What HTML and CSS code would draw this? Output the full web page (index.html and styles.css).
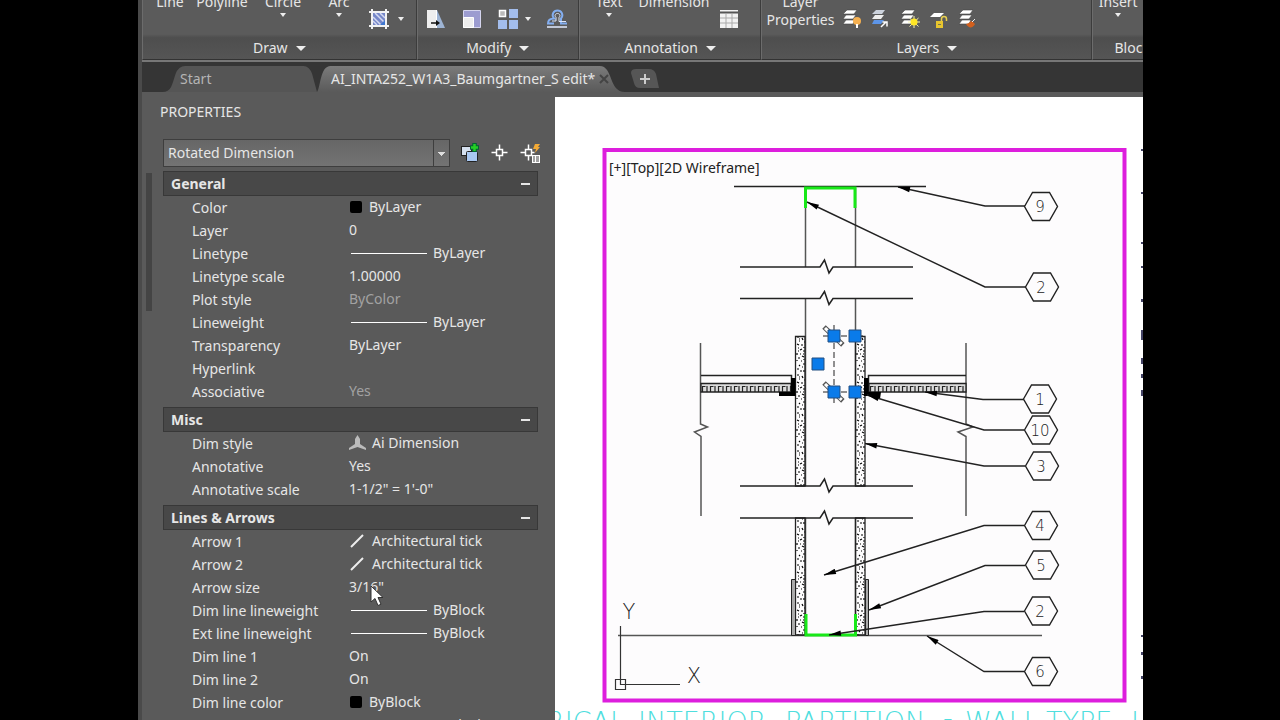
FILE: index.html
```html
<!DOCTYPE html>
<html lang="en">
<head>
<meta charset="utf-8">
<title>AI_INTA252_W1A3_Baumgartner_S edit</title>
<link rel="stylesheet" href="styles.css">
</head>
<body>
<div class="app">
  <header class="ribbon">
    <section class="panel draw">
      <div class="tools">
        <button class="tool w-line">Line<i class="slot"></i></button>
        <button class="tool w-poly">Polyline<i class="slot"></i></button>
        <button class="tool w-circle">Circle<i class="slot caret"></i></button>
        <button class="tool w-arc">Arc<i class="slot caret"></i></button>
        <button class="mini split" aria-label="Hatch"><svg width="20" height="20" viewBox="0 0 20 20"><rect x="4" y="4" width="12" height="12" fill="#7687c8"/><path d="M4 8l8 8M4 12l4 4M6 4l10 10M11 4l5 5" stroke="#d5daf0" stroke-width="1.500"/><path d="M11 16l5-5v5z" fill="#3f78d0"/><path d="M3 0v20M17 0v20M0 3h20M0 17h20" stroke="#f2f2f2" stroke-width="2"/></svg><i class="caret"></i></button>
      </div>
      <button class="title">Draw<i class="caret big"></i></button>
    </section>
    <section class="panel modify">
      <div class="tools spread">
        <button class="mini" aria-label="Stretch"><svg width="20" height="20" viewBox="0 0 20 20"><path d="M1 1h9v18H1z" fill="#eee"/><path d="M11 1l8 18h-8z" fill="#9eb4d4"/><path d="M10.500 1v18" stroke="#fff"/><path d="M5 14h7" stroke="#111" stroke-width="1.500"/><path d="M10 11l4 3-4 3z" fill="#111"/></svg></button>
        <button class="mini" aria-label="Scale"><svg width="20" height="20" viewBox="0 0 20 20"><path d="M1.500 1.500h17v17h-17z" fill="#9c9cd0" stroke="#d5d5ee"/><path d="M1.500 8.500h10v10h-10z" fill="#eee" stroke="#fff"/></svg></button>
        <button class="mini split" aria-label="Array"><svg width="20" height="20" viewBox="0 0 20 20"><path d="M1.500 1.500h6v6h-6z" fill="#bbb" stroke="#fff" stroke-width="1.500"/><path d="M11 0h9v9h-9zM0 11h9v9H0zM11 11h9v9h-9z" fill="#a3bdec"/></svg><i class="caret"></i></button>
        <button class="mini" aria-label="Offset"><svg width="20" height="20" viewBox="0 0 20 20"><path d="M0 18h20" stroke="#e5ecff" stroke-width="1.500"/><path d="M20 14.500H14V9.500C17 6 14.500 1.500 10.500 1.500S4 6 7 9.500C3 9.500 1 11.500 1 14.500H7" fill="none" stroke="#83aef0" stroke-width="2"/><path d="M19 12.500h-7V8.500c2-2 .500-4-1.500-4s-3.500 2-1.500 4v3.500H5" fill="none" stroke="#dde6fa"/></svg></button>
      </div>
      <button class="title">Modify<i class="caret big"></i></button>
    </section>
    <section class="panel annot">
      <div class="tools">
        <button class="tool w-text">Text<i class="slot caret"></i></button>
        <button class="tool w-dim">Dimension<i class="slot"></i></button>
        <button class="mini" aria-label="Table"><svg width="18" height="20" viewBox="0 0 18 20"><path d="M0 1h18v18H0z" fill="#f2f2f2"/><path d="M0 3.500h18" stroke="#555" stroke-width="2"/><path d="M0 9h18M0 14h18M6 5v14M12 5v14" stroke="#aaa"/></svg></button>
      </div>
      <button class="title">Annotation<i class="caret big"></i></button>
    </section>
    <section class="panel layers">
      <div class="tools">
        <button class="mini stacked">Layer<br>Properties</button>
        <div class="icons">
          <button class="mini" aria-label="Layer off"><svg width="20" height="20" viewBox="0 0 20 20"><path d="M5 1h10l-3 4H1zM4 6h10l-3 4H1zM4 11h9l-2 4H1z" fill="#fff" stroke="#444" stroke-width=".6"/><circle cx="15" cy="12" r="4" fill="#f5b050"/><path d="M15 15v4" stroke="#fff" stroke-width="2"/></svg></button>
          <button class="mini" aria-label="Layer match"><svg width="20" height="20" viewBox="0 0 20 20"><path d="M5 1h9l-3 4H1z" fill="#ccd2dc"/><path d="M4 6h9l-3 4H1z" fill="#eee"/><path d="M3 11h10l-3 4H1z" fill="#5d95e8"/><path d="M10 18l5-5M11.500 13H16v4.500" fill="none" stroke="#fff" stroke-width="1.500"/></svg></button>
          <button class="mini" aria-label="Layer freeze"><svg width="20" height="20" viewBox="0 0 20 20"><path d="M5 1h10l-3 4H1zM4 6h10l-3 4H1zM4 11h9l-2 4H1z" fill="#fff" stroke="#444" stroke-width=".6"/><path d="M14 7v12M8 13h12M9.500 9l9 8.500M18.500 9l-9 8.500" stroke="#f8f5b0"/><circle cx="14" cy="13" r="3.500" fill="#ffe624"/></svg></button>
          <button class="mini" aria-label="Layer unlock"><svg width="20" height="20" viewBox="0 0 20 20"><path d="M5 4h10l-4 4H1z" fill="#fff"/><path d="M7 12h7v7H7z" fill="#e8c52e"/><path d="M9 15.500h3" stroke="#775"/><path d="M12.500 12v-2a2.500 2.500 0 0 1 5 0v2" fill="none" stroke="#e8d050" stroke-width="1.500"/></svg></button>
          <button class="mini" aria-label="Layer change"><svg width="20" height="20" viewBox="0 0 20 20"><path d="M5 1h10l-3 4H1zM4 6h10l-3 4H1zM4 11h9l-2 4H1z" fill="#fff" stroke="#444" stroke-width=".6"/><path d="M8 15c3 0 4-3 6-3l3 3c-2 4-6 5-9 0z" fill="#d2601e"/><path d="M14 13l3-3" stroke="#eee"/></svg></button>
        </div>
      </div>
      <button class="title">Layers<i class="caret big"></i></button>
    </section>
    <section class="panel block">
      <div class="tools"><button class="tool w-insert">Insert<i class="slot caret"></i></button></div>
      <button class="title left">Bloc</button>
    </section>
  </header>

  <nav class="tabs">
    <button class="tab start"><svg class="shape" viewBox="0 0 160 27" preserveAspectRatio="none"><path d="M0 27C10 27 10 20 14 9Q17 1 24 1H146Q152 1 155 9L160 27z" fill="#555"/></svg><span>Start</span></button>
    <div class="tab active"><svg class="shape" viewBox="0 0 316 27" preserveAspectRatio="none"><defs><linearGradient id="tg" x2="0" y2="1"><stop stop-color="#7b7b7b"/><stop offset="1" stop-color="#5a5a5a"/></linearGradient></defs><path d="M0 27C4 22 3 1 14 1H290C304 1 299 27 316 27z" fill="url(#tg)"/></svg><button class="name">AI_INTA252_W1A3_Baumgartner_S edit*</button><button class="close" aria-label="Close"><svg width="10" height="10" viewBox="0 0 10 10"><path d="M1 1l8 8M9 1L1 9" stroke="#444" stroke-width="2"/></svg></button></div>
    <button class="add" aria-label="New tab"><svg width="28" height="19" viewBox="0 0 28 19"><path d="M5 0h13q5 0 7 5l3 14H9Q4 19 3 14L0 4Q0 0 5 0z" fill="#565656"/><path d="M14 5v10M9 10h10" stroke="#ccc" stroke-width="2"/></svg></button>
  </nav>

  <main class="work">
    <aside class="props">
      <h1>PROPERTIES</h1>
      <div class="chooser">
        <select aria-label="Object type"><option>Rotated Dimension</option></select>
        <button class="pick" aria-label="Toggle pickadd"><svg width="20" height="20" viewBox="0 0 20 20"><rect x="1.500" y="3.500" width="10" height="9" fill="#d5e0ee" stroke="#222"/><rect x="6.500" y="8.500" width="11" height="10" rx="1" fill="#a9c8f2" stroke="#222"/><path d="M14.500 0v9M10 4.500h9" stroke="#063" stroke-width="4.500"/><path d="M14.500 1v7M11 4.500h7" stroke="#25d025" stroke-width="2.500"/></svg></button>
        <button class="pick" aria-label="Select objects"><svg width="20" height="20" viewBox="0 0 20 20"><path d="M9.500 1.500v5M9.500 12.500v5M1.500 9.500h5M12.500 9.500h5M6.500 6.500h6v6h-6z" fill="none" stroke="#fff" stroke-width="1.500"/></svg></button>
        <button class="pick" aria-label="Quick select"><svg width="20" height="20" viewBox="0 0 20 20"><path d="M8.500 1.500v5M8.500 12.500v5M.500 9.500h5M11.500 9.500h3M5.500 6.500h6v6h-6z" fill="none" stroke="#fff" stroke-width="1.500"/><path d="M15 1h5l-2 3h2l-5 6 1-4h-3z" fill="#f3aa35"/><path d="M12 12h8v8h-8z" fill="#fff"/><path d="M13 14h2m1 0h3m-6 2h2m1 0h3m-6 2h2m1 0h3" stroke="#444"/></svg></button>
      </div>
      <div class="list">
        <div class="thumb"></div>
        <div class="groups">
          <section>
            <h2>General<button aria-label="Collapse General"><i class="minus"></i></button></h2>
            <table>
              <tr><th>Color</th><td><i class="swatch"></i>ByLayer</td></tr>
              <tr><th>Layer</th><td>0</td></tr>
              <tr><th>Linetype</th><td><i class="rule"></i>ByLayer</td></tr>
              <tr><th>Linetype scale</th><td>1.00000</td></tr>
              <tr><th>Plot style</th><td class="dim">ByColor</td></tr>
              <tr><th>Lineweight</th><td><i class="rule"></i>ByLayer</td></tr>
              <tr><th>Transparency</th><td>ByLayer</td></tr>
              <tr><th>Hyperlink</th><td></td></tr>
              <tr><th>Associative</th><td class="dim">Yes</td></tr>
            </table>
          </section>
          <section>
            <h2>Misc<button aria-label="Collapse Misc"><i class="minus"></i></button></h2>
            <table>
              <tr><th>Dim style</th><td><svg class="glyph" width="17" height="16" viewBox="0 0 17 16"><path d="M8.500 0L11 4v5l6 4v2l-8.500-3L0 15v-2l6-4V4z" fill="#bbb"/></svg>Ai Dimension</td></tr>
              <tr><th>Annotative</th><td>Yes</td></tr>
              <tr><th>Annotative scale</th><td>1-1/2" = 1'-0"</td></tr>
            </table>
          </section>
          <section>
            <h2>Lines &amp; Arrows<button aria-label="Collapse Lines and Arrows"><i class="minus"></i></button></h2>
            <table>
              <tr><th>Arrow 1</th><td><svg class="glyph" width="17" height="16" viewBox="0 0 17 16"><path d="M2 14L14 2" stroke="#eee" stroke-width="2"/></svg>Architectural tick</td></tr>
              <tr><th>Arrow 2</th><td><svg class="glyph" width="17" height="16" viewBox="0 0 17 16"><path d="M2 14L14 2" stroke="#eee" stroke-width="2"/></svg>Architectural tick</td></tr>
              <tr><th>Arrow size</th><td class="hover">3/16"<svg class="cursor" width="14" height="22" viewBox="0 0 14 22"><path d="M1 1v16l4-3.500 3 7 3-1.300-3-6.700h5z" fill="#fff" stroke="#333"/></svg></td></tr>
              <tr><th>Dim line lineweight</th><td><i class="rule"></i>ByBlock</td></tr>
              <tr><th>Ext line lineweight</th><td><i class="rule"></i>ByBlock</td></tr>
              <tr><th>Dim line 1</th><td>On</td></tr>
              <tr><th>Dim line 2</th><td>On</td></tr>
              <tr><th>Dim line color</th><td><i class="swatch"></i>ByBlock</td></tr>
              <tr><th></th><td><i class="rule"></i>ByBlock</td></tr>
            </table>
          </section>
        </div>
      </div>
    </aside>

    <div class="canvas">
      <svg class="drawing" viewBox="555 97 588 623" preserveAspectRatio="xMinYMin slice">
        <defs>
          <pattern id="gyp" x="796" y="336" width="10" height="38" patternUnits="userSpaceOnUse">
            <path d="M1 1h2M6 2l1 2M3 5h1M8 6h1M1 8l2 1M5 9h2M8 11v1M2 12h1M4 14l2-1M7 15h2M1 17v2M4 18h1M6 20l2 1M2 22h2M8 24v-1M5 25h1M3 29l1 1M7 28h2M6 31h1M1 33h2M8 34v2M4 35h2M7 18h1M1 25v-1M3 3h1M2 15h1" stroke="#000" stroke-width="1.200" fill="none"/>
          </pattern>
          <pattern id="insul" x="701" y="383" width="8" height="10" patternUnits="userSpaceOnUse">
            <path d="M1.500 10V3.500h3M6 3v6" fill="none" stroke="#222" stroke-width="1.200"/>
          </pattern>
          <marker id="arr" markerUnits="userSpaceOnUse" markerWidth="14" markerHeight="8" refX="0" refY="3" orient="auto"><path d="M0 3L12 .3v5.400z" fill="#000"/></marker>
          <path id="hex" d="M-16.500 0L-8.500-14H8.500L16.500 0L8.500 14H-8.500z" fill="#fdfcfd"/>
          <path id="brk" d="M740 0h80l4.500-7 4.500 13 4-6h80"/>
        </defs>
        <rect x="604.500" y="150" width="520" height="550.500" fill="#fdfcfd" stroke="#dd1edd" stroke-width="4"/>

        <g fill="none" stroke="#555" stroke-width="1.500">
          <path d="M805.500 188V267M855.500 188V267M805.500 299V486M855.500 299V486M805.500 518V635M855.500 518V635"/>
          <path d="M700.500 343V424l7 3-13 5 6.500 4.500V516M966 343V424l7 3-15 5 8 4.500V516"/>
          <path d="M618 635.500H1042"/>
        </g>
        <g fill="url(#gyp)" stroke="#222" stroke-width="1.300">
          <path d="M795.500 336.500h9.500V486h-9.500zM855.500 336.500h9.500V486h-9.500zM795.500 518h9.500v117h-9.500zM855.500 518h9.500v117h-9.500z"/>
        </g>
        <g fill="#aaa" stroke="#222"><path d="M791.500 579.500h4v56h-4zM865.500 579.500h3v56h-3z"/></g>
        <g fill="none" stroke="#222" stroke-width="1.500">
          <path d="M734 186.500H926"/>
          <use href="#brk" y="267"/><use href="#brk" y="298.500"/><use href="#brk" y="486"/><use href="#brk" y="518"/>
          <path d="M701 375.500h90.500V392M966 375.500h-97.500V392"/>
        </g>
        <g fill="#dcdcdc"><path d="M701 383.500h90V392h-90zM869 383.500h97V392h-97z"/></g>
        <g fill="url(#insul)" stroke="#222" stroke-width="1.300"><path d="M701 383.500h90V392h-90zM869 383.500h97V392h-97z"/></g>
        <path d="M791 378h4.500v18H779v-4h12zM864 378h4.500v14H881l-1 7-8-3h-8z"/>
        <path d="M805.500 208V188H855V208M806 614V635H855.500V614" fill="none" stroke="#18e818" stroke-width="3"/>

        <g fill="none" stroke="#222" stroke-width="1.400">
          <path marker-start="url(#arr)" d="M898 187L985 206H1025"/>
          <path marker-start="url(#arr)" d="M807 202L985 287H1026"/>
          <path marker-start="url(#arr)" d="M925 392L983 399.500H1024"/>
          <path marker-start="url(#arr)" d="M867 395L984 430H1024"/>
          <path marker-start="url(#arr)" d="M865 443.500L984 466H1025"/>
          <path marker-start="url(#arr)" d="M824 575L984 525.500H1024"/>
          <path marker-start="url(#arr)" d="M869 610L985 565.500H1025"/>
          <path marker-start="url(#arr)" d="M829 635L984 611.500H1024"/>
          <path marker-start="url(#arr)" d="M927 636L984 671.500H1024"/>
        </g>
        <g stroke="#222" stroke-width="1.400">
          <use href="#hex" x="1041" y="206.500"/><use href="#hex" x="1042" y="287"/><use href="#hex" x="1040" y="399"/><use href="#hex" x="1041" y="430"/><use href="#hex" x="1042" y="466"/><use href="#hex" x="1041" y="525.500"/><use href="#hex" x="1042" y="565"/><use href="#hex" x="1041" y="611"/><use href="#hex" x="1041" y="671.500"/>
        </g>
        <g class="cad num">
          <text x="1040" y="212">9</text><text x="1041" y="293">2</text><text x="1040" y="405">1</text><text x="1040" y="436">10</text><text x="1041" y="472">3</text><text x="1040" y="531">4</text><text x="1041" y="571">5</text><text x="1040" y="617">2</text><text x="1040" y="677">6</text>
        </g>

        <path d="M834 325V403M823 336h40M823 392h40" fill="none" stroke="#222" stroke-dasharray="6 3"/>
        <g fill="none"><path d="M824 327l19 18M824 383l19 18" stroke="#555" stroke-width="5" stroke-dasharray="9 8"/><path d="M825 328l18 17M825 384l18 17" stroke="#fff" stroke-width="3" stroke-dasharray="7 9"/></g>
        <g fill="#0a7bea" stroke="#224f80"><path d="M828 330h12v12h-12zM849 330h12v12h-12zM812 358h12v12h-12zM828 386h12v12h-12zM849 386h12v12h-12z"/></g>

        <path d="M620.500 626V684.500H680M615.500 679.500h10v10h-10z" fill="none" stroke="#333" stroke-width="1.200"/>
        <text class="cad axis" x="629" y="619">Y</text><text class="cad axis" x="694" y="683">X</text>
        <text class="view" x="609" y="173">[+][Top][2D Wireframe]</text>
        <g class="cad caption"><text x="546" y="731">RICAL</text><text x="638" y="731">INTERIOR</text><text x="785" y="731">PARTITION</text><text x="943" y="727">-</text><text x="965" y="731">WALL</text><text x="1046" y="731">TYPE</text><text x="1131" y="731">I</text></g>
        <path d="M1142 149v2M1142 192v2M1142 242v2M1142 266v2M1142 299v3M1142 330v10M1142 358v6M1142 374v4M1142 390v6M1142 635v2M1142 652v3M1142 676v3" stroke="#446" stroke-width="2"/>
      </svg>
    </div>
  </main>
</div>
</body>
</html>
```
FILE: styles.css
```css
* { box-sizing: border-box; }
body {
  margin: 0;
  background: #000;
  color: #e6e6e6;
  font: 14px/18px "Noto Sans", "Open Sans", sans-serif;
}
button {
  margin: 0;
  padding: 0;
  border: 0;
  background: none;
  color: inherit;
  font: inherit;
  white-space: nowrap;
}
svg { display: block; flex: none; }
.app {
  height: 100vh;
  margin: 0 137px 0 138px;
  border-left: 4px solid #4a4a4a;
  background: #5a5a5a;
  display: flex;
  flex-direction: column;
  overflow: hidden;
}

.ribbon {
  display: flex;
  height: 62px;
  flex: none;
  border-bottom: 2px solid #777;
  background: #5b5b5b;
}
.panel {
  display: flex;
  flex-direction: column;
  overflow: hidden;
  border-right: 1px solid #3c3c3c;
  border-left: 1px solid #6c6c6c;
  border-bottom: 1px solid #333;
  background: linear-gradient(#5b5b5b 58%, #4e4e4e 64%, #555);
}
.draw { flex: 275 0 0; }
.modify { flex: 162 0 0; }
.annot { flex: 182 0 0; }
.layers { flex: 332 0 0; }
.block { flex: 50 0 0; border-right: 0; }
.tools {
  height: 37px;
  display: flex;
  align-items: flex-end;
}
.tool {
  display: flex;
  flex-direction: column;
  align-items: center;
  padding-bottom: 18px;
}
.slot { height: 8px; display: flex; align-items: center; }
.caret::before {
  content: "";
  display: block;
  border: 3px solid transparent;
  border-top: 4px solid #eee;
  border-bottom: 0;
}
.caret.big::before { border-width: 5px 5px 0; }
.mini { padding-bottom: 8px; }
.split { display: flex; align-items: center; gap: 9px; }
.w-line { width: 54px; }
.w-poly { width: 50px; }
.w-circle { width: 72px; }
.w-arc { width: 40px; margin-right: 10px; }
.spread { padding: 0 11px 0 8px; justify-content: space-between; }
.spread .split { gap: 7px; }
.w-text { width: 58px; }
.w-dim { width: 72px; margin-right: 10px; }
.w-insert { width: 51px; }
.stacked { width: 76px; line-height: 18px; }
.icons { display: flex; gap: 9px; margin-left: 4px; }
.title {
  height: 22px;
  display: flex;
  align-items: center;
  justify-content: center;
  gap: 8px;
}
.title.left { justify-content: flex-start; padding-left: 21px; }

.tabs {
  height: 30px;
  flex: none;
  display: flex;
  align-items: flex-end;
  padding-left: 20px;
  background: #353535;
}
.tab {
  position: relative;
  height: 27px;
  display: flex;
  align-items: center;
}
.shape { position: absolute; inset: 0; width: 100%; height: 100%; }
.start { width: 155px; color: #b4b4b4; }
.start span { position: relative; padding-left: 18px; }
.active { width: 308px; padding-left: 14px; gap: 4px; }
.active button { position: relative; }
.add { padding: 0 0 4px 6px; }

.work { flex: 1; min-height: 0; display: flex; }
.props {
  width: 413px;
  flex: none;
  overflow: hidden;
  padding: 11px 0 0 4px;
}
h1 {
  margin: 0 0 18px 14px;
  font-size: 14px;
  line-height: 18px;
  font-weight: 400;
}
.chooser { display: flex; align-items: center; margin: 0 11px 4px 17px; }
select {
  width: 287px;
  height: 28px;
  margin-right: 10px;
  padding: 0 4px;
  border: 1px solid #3e3e3e;
  border-radius: 0;
  color: #e6e6e6;
  font: inherit;
  appearance: none;
  background:
    linear-gradient(#ddd, #ddd) right 4px top 12px / 7px 1px no-repeat,
    linear-gradient(#ddd, #ddd) right 5px top 13px / 5px 1px no-repeat,
    linear-gradient(#ddd, #ddd) right 6px top 14px / 3px 1px no-repeat,
    linear-gradient(#ddd, #ddd) right 7px top 15px / 1px 1px no-repeat,
    linear-gradient(#3e3e3e, #3e3e3e) right 15px top 0 / 1px 100% no-repeat,
    linear-gradient(#666, #737373);
}
.pick { margin-right: 10px; }
.pick:last-child { margin-right: 0; }
.list { display: flex; }
.thumb { width: 6px; height: 138px; margin: 2px 11px 0 0; background: #444; }
.groups { width: 375px; }
h2 {
  height: 25px;
  margin: 0;
  padding: 0 7px;
  display: flex;
  align-items: center;
  justify-content: space-between;
  border: 1px solid #383838;
  background: #484848;
  font-size: 14px;
  line-height: 18px;
}
.minus { display: block; width: 9px; height: 2px; background: #e6e6e6; }
section + section h2 { margin-top: 4px; }
table { width: 100%; border-collapse: collapse; table-layout: fixed; }
th, td { height: 23px; padding: 0; white-space: nowrap; text-align: left; font-weight: 400; }
th { width: 186px; padding-left: 29px; }
td { padding-bottom: 2px; }
.dim { color: #a2a2a2; }
.swatch {
  display: inline-block;
  width: 12px;
  height: 12px;
  margin: 0 7px 0 1px;
  vertical-align: -1px;
  border-radius: 2px;
  background: #000;
}
.rule {
  display: inline-block;
  width: 76px;
  height: 1px;
  margin: 0 6px 0 2px;
  vertical-align: 4px;
  background: #fff;
}
.glyph { display: inline-block; margin-right: 6px; vertical-align: -3px; }
.hover { position: relative; }
.cursor { position: absolute; left: 21px; top: 9px; }

.canvas { flex: 1; min-width: 0; margin-top: 5px; background: #fff; }
.drawing { width: 100%; height: 100%; }
.cad { font-family: "DejaVu Sans", "Lato", sans-serif; font-weight: 200; fill: #222; }
.num { font-size: 15px; text-anchor: middle; }
.axis { font-size: 21px; text-anchor: middle; }
.caption { font-size: 27px; fill: #4fdede; }
.view { font: 14px "Noto Sans", sans-serif; fill: #222; }
```
